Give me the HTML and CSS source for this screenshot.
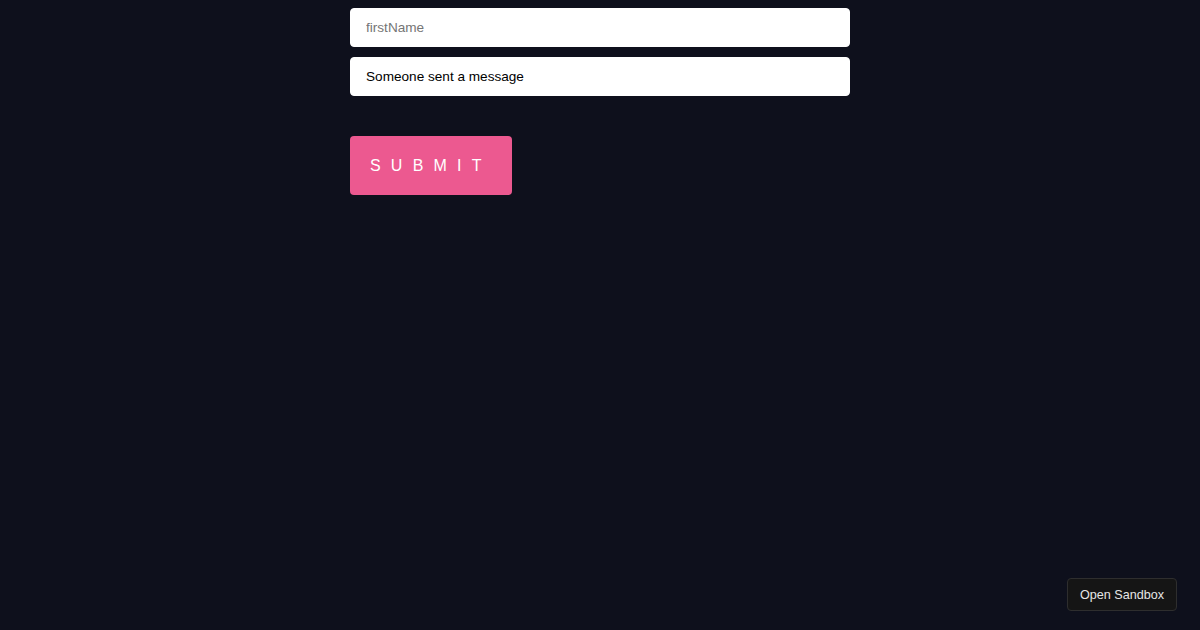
FILE: index.html
```
<!DOCTYPE html>
<html>
<head>
<meta charset="utf-8">
<link rel="stylesheet" href="styles.css">
</head>
<body>
<form class="form">
  <input class="field" type="text" placeholder="firstName">
  <input class="field" type="text" value="Someone sent a message">
  <button class="submit" type="button">Submit</button>
</form>
<a class="sandbox">Open Sandbox</a>
</body>
</html>
```
FILE: styles.css
```
html, body {
  margin: 0;
  padding: 0;
  background: #0e101c;
  font-family: "Liberation Sans", Arial, sans-serif;
}
.form {
  width: 500px;
  margin: 0 auto;
  padding-top: 8px;
}
.field {
  display: block;
  box-sizing: border-box;
  width: 100%;
  height: 39px;
  border-radius: 4px;
  border: 1px solid #ffffff;
  background: #ffffff;
  padding: 10px 15px 10px 15px;
  margin: 0 0 10px 0;
  font-family: "Liberation Sans", Arial, sans-serif;
  font-size: 13.6px;
  color: #000000;
  outline: none;
}
.field::placeholder {
  color: #757575;
}
.submit {
  display: block;
  margin-top: 40px;
  background: #ec5990;
  color: #ffffff;
  text-transform: uppercase;
  border: none;
  border-radius: 4px;
  padding: 20px;
  height: 59px;
  font-family: "Liberation Sans", Arial, sans-serif;
  font-size: 16px;
  font-weight: 100;
  letter-spacing: 10.2px;
  line-height: 19px;
}
.sandbox {
  position: fixed;
  right: 23px;
  bottom: 19px;
  box-sizing: border-box;
  height: 33px;
  padding: 0 12px;
  display: flex;
  align-items: center;
  background: #151515;
  border: 1px solid #2e2e2e;
  border-radius: 4px;
  color: #e6e6e6;
  font-family: "Liberation Sans", Arial, sans-serif;
  font-size: 12.6px;
}
```
